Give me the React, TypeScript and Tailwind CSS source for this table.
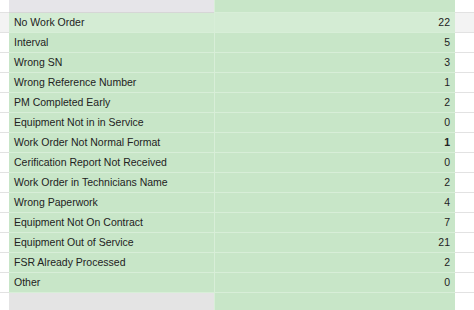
const rows: { label: string; value: number; bold?: boolean }[] = [
  { label: "No Work Order", value: 22 },
  { label: "Interval", value: 5 },
  { label: "Wrong SN", value: 3 },
  { label: "Wrong Reference Number", value: 1 },
  { label: "PM Completed Early", value: 2 },
  { label: "Equipment Not in in Service", value: 0 },
  { label: "Work Order Not Normal Format", value: 1, bold: true },
  { label: "Cerification Report Not Received", value: 0 },
  { label: "Work Order in Technicians Name", value: 2 },
  { label: "Wrong Paperwork", value: 4 },
  { label: "Equipment Not On Contract", value: 7 },
  { label: "Equipment Out of Service", value: 21 },
  { label: "FSR Already Processed", value: 2 },
  { label: "Other", value: 0 },
];

export default function App() {
  return (
    <div
      className="w-[474px] h-[310px] overflow-hidden bg-white text-[10.5px] text-[#222]"
      style={{ fontFamily: '"Liberation Sans", Arial, sans-serif' }}
    >
      <div className="flex h-[13px]">
        <div className="w-[9px] border-b border-[#e2e2e2]" />
        <div className="w-[205px] bg-[#e6e5e9] border-b border-[#d6d6d6]" />
        <div className="w-[241px] bg-[#c8e6c8] border-b border-l border-[#d8eed8]" />
        <div className="flex-1 border-b border-[#e2e2e2]" />
      </div>
      {rows.map((r, i) => {
        const first = i === 0;
        return (
          <div key={r.label} className="flex h-[20px]">
            <div className={`w-[9px] border-b border-[#e2e2e2] ${first ? "bg-[#f3f3f3]" : ""}`} />
            <div
              className={`w-[205px] flex items-center pl-[5px] border-b border-[#d8eed8] ${
                first ? "bg-[#d4ecd4]" : "bg-[#c8e6c8]"
              }`}
            >
              {r.label}
            </div>
            <div
              className={`w-[241px] flex items-center justify-end pr-[5px] border-b border-l border-[#d8eed8] ${
                first ? "bg-[#d4ecd4]" : "bg-[#c8e6c8]"
              } ${r.bold ? "font-bold" : ""}`}
            >
              {r.value}
            </div>
            <div className={`flex-1 border-b border-[#e2e2e2] ${first ? "bg-[#f3f3f3]" : ""}`} />
          </div>
        );
      })}
      <div className="flex h-[17px]">
        <div className="w-[9px]" />
        <div className="w-[205px] bg-[#e4e4e4]" />
        <div className="w-[241px] bg-[#c8e6c8] border-l border-[#d8eed8]" />
        <div className="flex-1" />
      </div>
    </div>
  );
}
